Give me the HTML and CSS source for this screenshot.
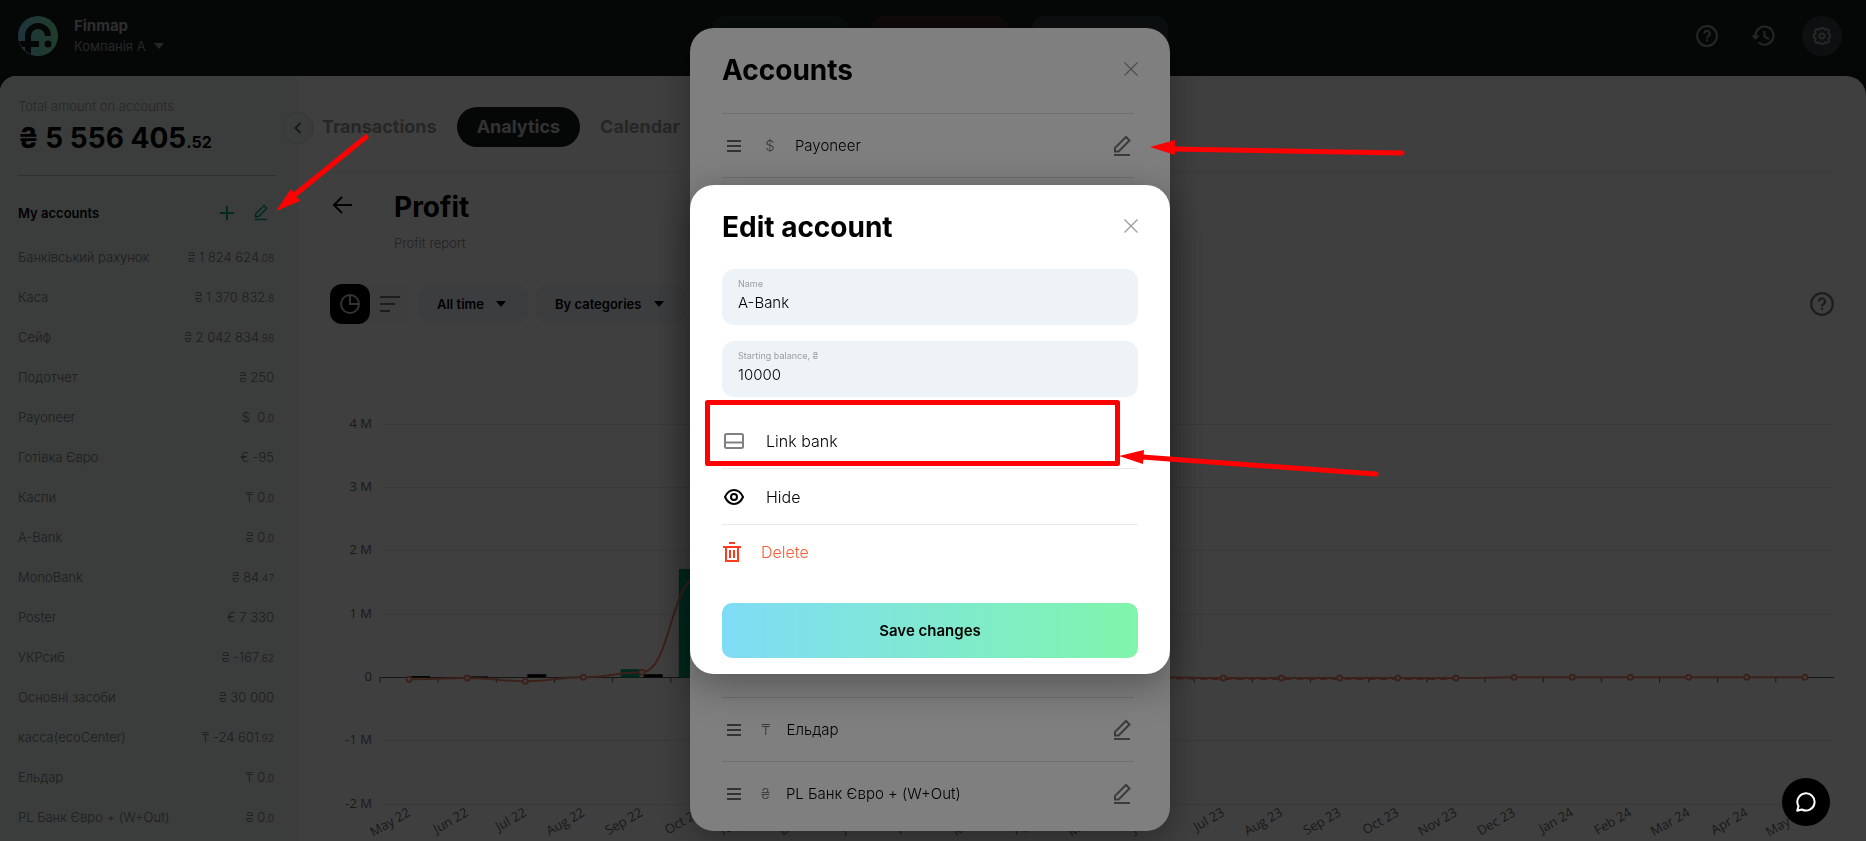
FILE: index.html
```html
<!DOCTYPE html>
<html lang="en">
<head>
    <meta charset="UTF-8">
    <meta name="viewport" content="width=device-width, initial-scale=1.0">
    <title>Finmap</title>
    <link rel="stylesheet" href="styles.css">
</head>
<body>
    <!-- Shared icons -->
    <svg class="sprite" aria-hidden="true">
        <symbol id="icon-edit" viewBox="0 0 18 22">
            <path d="M2 16.5v-3.6L13 2l3.5 3.5L5.6 16.5z" fill="none" stroke="currentColor" stroke-width="2"/>
            <path d="M1 20h16" stroke="currentColor" stroke-width="2"/>
        </symbol>
        <symbol id="icon-close" viewBox="0 0 14 14">
            <path d="M0.5 0.5l13 13M13.5 0.5l-13 13" stroke="currentColor" stroke-width="1.2"/>
        </symbol>
        <symbol id="icon-drag" viewBox="0 0 14 12">
            <path d="M0 1h14M0 6h14M0 11h14" stroke="currentColor" stroke-width="2"/>
        </symbol>
        <symbol id="icon-help" viewBox="0 0 24 24">
            <circle cx="12" cy="12" r="10.8" fill="none" stroke="currentColor" stroke-width="2.2"/>
            <path d="M9 9.6a3 3 0 1 1 4.6 2.4c-1 .7-1.6 1.2-1.6 2.4" fill="none" stroke="currentColor" stroke-width="2.2"/>
            <rect x="10.9" y="15.8" width="2.2" height="2.2" fill="currentColor"/>
        </symbol>
    </svg>

    <header class="header">
        <div class="brand">
            <svg class="logo" viewBox="0 0 40 40" aria-hidden="true">
                <defs>
                    <linearGradient id="logoFill" x1="0" x2="1">
                        <stop offset="0" stop-color="#7fd0f5"/>
                        <stop offset="1" stop-color="#80f5a8"/>
                    </linearGradient>
                    <clipPath id="logoClip"><circle cx="20" cy="20" r="19.5"/></clipPath>
                </defs>
                <circle cx="20" cy="20" r="20" fill="url(#logoFill)"/>
                <g clip-path="url(#logoClip)">
                    <path d="M10 40V20a10 10 0 0 1 20 0" fill="none" stroke="#151f1c" stroke-width="6"/>
                    <path d="M0 28h21" stroke="#151f1c" stroke-width="6"/>
                    <circle cx="30" cy="28" r="3.5" fill="#151f1c"/>
                </g>
            </svg>
            <div class="brand-text">
                <strong>Finmap</strong>
                <span class="company">
                    <select aria-label="Company">
                        <option>Компанія A</option>
                    </select>
                    <svg class="caret" viewBox="0 0 10 6" aria-hidden="true"><path d="M0 0h10L5 6z" fill="currentColor"/></svg>
                </span>
            </div>
        </div>
        <div class="quick-actions">
            <button class="quick income">Income</button>
            <button class="quick expense">Expense</button>
            <button class="quick transfer">Transfer</button>
        </div>
        <div class="header-tools">
            <button class="tool" aria-label="Help"><svg width="22" height="22" viewBox="0 0 24 24"><use href="#icon-help"/></svg></button>
            <button class="tool" aria-label="History">
                <svg width="24" height="24" viewBox="0 0 24 24">
                    <path d="M4.5 12a9 9 0 1 1 3.2 6.5" fill="none" stroke="currentColor" stroke-width="2"/>
                    <path d="M0.5 11.5h8L4.5 16z" fill="currentColor"/>
                    <path d="M13.5 7v5.5l4.5 2.6" fill="none" stroke="currentColor" stroke-width="2"/>
                </svg>
            </button>
            <button class="tool active" aria-label="Settings">
                <svg width="20" height="20" viewBox="0 0 20 20" fill="none" stroke="currentColor" stroke-width="2" stroke-linejoin="round">
                    <path d="M8.2 2.6 L10 1.8 L11.8 2.6 L12.5 3.8 L14.3 3 L16.3 3.7 L17 5.6 L16.3 7.5 L17.9 8.3 L18.3 10 L17.9 11.7 L16.3 12.5 L17 14.4 L16.3 16.3 L14.3 17 L12.5 16.2 L11.8 17.4 L10 18.2 L8.2 17.4 L7.5 16.2 L5.7 17 L3.7 16.3 L3 14.4 L3.7 12.5 L2.1 11.7 L1.7 10 L2.1 8.3 L3.7 7.5 L3 5.6 L3.7 3.7 L5.7 3 L7.5 3.8z"/>
                    <circle cx="10" cy="10" r="2.6"/>
                </svg>
            </button>
        </div>
    </header>

    <div class="layout">
        <aside class="sidebar">
            <div class="total">
                <p>Total amount on accounts</p>
                <strong>₴ 5 556 405<small>.52</small></strong>
                <button class="collapse" aria-label="Collapse sidebar">
                    <svg width="8" height="12" viewBox="0 0 8 12"><path d="M6.5 1L1.5 6l5 5" fill="none" stroke="currentColor" stroke-width="2"/></svg>
                </button>
            </div>
            <div class="accounts-head">
                <h2>My accounts</h2>
                <button aria-label="Add account"><svg width="14" height="14" viewBox="0 0 14 14"><path d="M7 0v14M0 7h14" stroke="currentColor" stroke-width="2"/></svg></button>
                <button aria-label="Edit accounts"><svg width="14" height="17"><use href="#icon-edit"/></svg></button>
            </div>
            <ul class="accounts">
                <li><span>Банківський рахунок</span><span>₴ 1 824 624<small>.08</small></span></li>
                <li><span>Каса</span><span>₴ 1 370 832<small>.8</small></span></li>
                <li><span>Сейф</span><span>₴ 2 042 834<small>.98</small></span></li>
                <li><span>Подотчет</span><span>₴ 250</span></li>
                <li><span>Payoneer</span><span>$ &nbsp;0<small>.0</small></span></li>
                <li><span>Готівка Євро</span><span>€ -95</span></li>
                <li><span>Каспи</span><span>₸ 0<small>.0</small></span></li>
                <li><span>A-Bank</span><span>₴ 0<small>.0</small></span></li>
                <li><span>MonoBank</span><span>₴ 84<small>.47</small></span></li>
                <li><span>Poster</span><span>€ 7 330</span></li>
                <li><span>УКРсиб</span><span>₴ -167<small>.62</small></span></li>
                <li><span>Основні засоби</span><span>₴ 30 000</span></li>
                <li><span>касса(ecoCenter)</span><span>₸ -24 601<small>.92</small></span></li>
                <li><span>Ельдар</span><span>₸ 0<small>.0</small></span></li>
                <li><span>PL Банк Євро + (W+Out)</span><span>₴ 0<small>.0</small></span></li>
            </ul>
        </aside>

        <main class="content">
            <nav class="tabs">
                <a href="#">Transactions</a>
                <a href="#" class="active">Analytics</a>
                <a href="#">Calendar</a>
            </nav>

            <div class="report-head">
                <button class="back" aria-label="Back">
                    <svg width="20" height="18" viewBox="0 0 20 18"><path d="M20 9H2.5M10 1L2 9l8 8" fill="none" stroke="currentColor" stroke-width="2"/></svg>
                </button>
                <div>
                    <h1>Profit</h1>
                    <p>Profit report</p>
                </div>
            </div>

            <div class="filters">
                <div class="view-switch">
                    <button class="active" aria-label="Chart view">
                        <svg width="20" height="20" viewBox="0 0 20 20" fill="none" stroke="currentColor" stroke-width="2"><circle cx="10" cy="10" r="9"/><path d="M10 1v9h9"/></svg>
                    </button>
                    <button aria-label="List view">
                        <svg width="20" height="16" viewBox="0 0 20 16"><path d="M0 1h20M0 8h15M0 15h10" stroke="currentColor" stroke-width="2"/></svg>
                    </button>
                </div>
                <span class="filter">
                    <select aria-label="Period"><option>All time</option></select>
                    <svg class="caret" viewBox="0 0 10 6" aria-hidden="true"><path d="M0 0h10L5 6z" fill="currentColor"/></svg>
                </span>
                <span class="filter">
                    <select aria-label="Grouping"><option>By categories</option></select>
                    <svg class="caret" viewBox="0 0 10 6" aria-hidden="true"><path d="M0 0h10L5 6z" fill="currentColor"/></svg>
                </span>
                <button class="help" aria-label="About this report"><svg width="24" height="24" viewBox="0 0 24 24"><use href="#icon-help"/></svg></button>
            </div>

            <svg id="chart" class="chart" role="img" aria-label="Profit by month"></svg>
        </main>
    </div>

    <!-- Accounts dialog -->
    <div class="backdrop">
        <section class="dialog accounts-dialog" role="dialog" aria-labelledby="accountsTitle">
            <div class="dialog-head">
                <h2 id="accountsTitle">Accounts</h2>
                <button class="close" aria-label="Close"><svg width="14" height="14"><use href="#icon-close"/></svg></button>
            </div>
            <ul class="account-list">
                <li><svg class="drag" width="14" height="12"><use href="#icon-drag"/></svg><span class="currency">&nbsp;$&nbsp;</span><span class="name">Payoneer</span><button aria-label="Edit Payoneer"><svg width="18" height="22"><use href="#icon-edit"/></svg></button></li>
                <li><svg class="drag" width="14" height="12"><use href="#icon-drag"/></svg><span class="currency">€</span><span class="name">Готівка Євро</span></li>
                <li><svg class="drag" width="14" height="12"><use href="#icon-drag"/></svg><span class="currency">₸</span><span class="name">Каспи</span></li>
                <li><svg class="drag" width="14" height="12"><use href="#icon-drag"/></svg><span class="currency">₴</span><span class="name">A-Bank</span></li>
                <li class="group-start"><svg class="drag" width="14" height="12"><use href="#icon-drag"/></svg><span class="currency">₴</span><span class="name">MonoBank</span></li>
                <li><svg class="drag" width="14" height="12"><use href="#icon-drag"/></svg><span class="currency">€</span><span class="name">Poster</span></li>
                <li><svg class="drag" width="14" height="12"><use href="#icon-drag"/></svg><span class="currency">₴</span><span class="name">УКРсиб</span></li>
                <li><svg class="drag" width="14" height="12"><use href="#icon-drag"/></svg><span class="currency">₴</span><span class="name">Основні засоби</span></li>
                <li><svg class="drag" width="14" height="12"><use href="#icon-drag"/></svg><span class="currency">₸</span><span class="name">касса(ecoCenter)</span></li>
                <li><svg class="drag" width="14" height="12"><use href="#icon-drag"/></svg><span class="currency">₸</span><span class="name">Ельдар</span><button aria-label="Edit Ельдар"><svg width="18" height="22"><use href="#icon-edit"/></svg></button></li>
                <li><svg class="drag" width="14" height="12"><use href="#icon-drag"/></svg><span class="currency">₴</span><span class="name">PL Банк Євро + (W+Out)</span><button aria-label="Edit PL Банк Євро"><svg width="18" height="22"><use href="#icon-edit"/></svg></button></li>
            </ul>
        </section>
    </div>

    <!-- Edit account dialog -->
    <div class="backdrop">
        <form class="dialog edit-dialog" role="dialog" aria-labelledby="editTitle">
            <div class="dialog-head">
                <h2 id="editTitle">Edit account</h2>
                <button type="button" class="close" aria-label="Close"><svg width="14" height="14"><use href="#icon-close"/></svg></button>
            </div>
            <div class="field">
                <label for="name">Name</label>
                <input type="text" id="name" value="A-Bank">
            </div>
            <div class="field">
                <label for="balance">Starting balance, ₴</label>
                <input type="text" id="balance" value="10000">
            </div>
            <div class="options">
                <button type="button" class="option">
                    <svg width="20" height="16" viewBox="0 0 20 16" fill="none" stroke="#808080" stroke-width="2"><rect x="1" y="1" width="18" height="14" rx="1.5"/><path d="M1 9.5h18"/></svg>
                    Link bank
                </button>
                <button type="button" class="option">
                    <svg width="20" height="16" viewBox="0 0 20 16" fill="none" stroke="#000" stroke-width="2"><path d="M1 8c2-4.500 5.200-7 9-7s7 2.500 9 7c-2 4.500-5.200 7-9 7s-7-2.500-9-7z"/><circle cx="10" cy="8" r="3"/></svg>
                    Hide
                </button>
                <button type="button" class="option delete">
                    <svg width="18" height="20" viewBox="0 0 18 20" fill="none" stroke="#ff3b1f" stroke-width="2"><path d="M6 1h6M0 5h18M3 5v14h12V5M7 8v8M11 8v8"/></svg>
                    Delete
                </button>
            </div>
            <button type="submit" class="save">Save changes</button>
        </form>
    </div>

    <!-- Guide marks -->
    <svg class="marks" viewBox="0 0 1866 841" aria-hidden="true">
        <g stroke="#f00" stroke-width="5" stroke-linecap="round" fill="none">
            <path d="M366 137L292 197"/>
            <path d="M1402 153L1172 149"/>
            <path d="M1376 474L1142 457"/>
            <rect x="707.5" y="402.5" width="410" height="61" stroke-linejoin="round"/>
        </g>
        <g fill="#f00">
            <path d="M276 211l15-22 9 12z"/>
            <path d="M1150 147l25-7v15z"/>
            <path d="M1119 456l25-6-1 14z"/>
        </g>
    </svg>

    <button class="chat" aria-label="Open chat">
        <svg width="20" height="20" viewBox="0 0 20 20"><path d="M1.2 18.8l1.3-4.600a8.600 8.600 0 1 1 3.400 3.300z" fill="none" stroke="currentColor" stroke-width="2" stroke-linejoin="round"/></svg>
    </button>

    <script src="chart.js"></script>
</body>
</html>
```
FILE: styles.css
```css
:root {
    --header-color: #151f1c;
    --sidebar-color: #eef4f1;
    --accent-color: #00a67c;
    --muted-color: #989c9b;
    --field-color: #edf3f6;
    --line-color: #e8e8e8;
}

* {
    margin: 0;
    padding: 0;
    box-sizing: border-box;
    font-family: Inter, "Noto Sans", sans-serif;
}

body {
    height: 100vh;
    overflow: hidden;
    background-color: var(--header-color);
    color: #000;
    font-size: 13px;
}

button {
    display: flex;
    align-items: center;
    justify-content: center;
    background: none;
    border: none;
    color: inherit;
    cursor: pointer;
}

select {
    appearance: none;
    background: none;
    border: none;
    color: inherit;
    cursor: pointer;
}

ul {
    list-style: none;
}

.sprite {
    position: absolute;
    width: 0;
    height: 0;
}

.caret {
    width: 10px;
    height: 6px;
    flex: none;
    pointer-events: none;
}

/* Header */
.header {
    display: grid;
    grid-template-columns: 1fr auto 1fr;
    align-items: center;
    height: 76px;
    padding: 0 24px 4px 18px;
    color: #969e9b;
}

.brand {
    display: flex;
    gap: 16px;
}

.logo {
    width: 40px;
    height: 40px;
}

.brand-text strong {
    display: block;
    font-size: 15px;
    line-height: 20px;
    color: #b4b8b6;
}

.company {
    display: flex;
    align-items: center;
    gap: 8px;
}

.company select {
    font-size: 13px;
    line-height: 20px;
}

.quick-actions {
    display: flex;
    gap: 24px;
    margin-left: 20px;
}

.quick {
    width: 136px;
    height: 40px;
    border-radius: 12px;
}

.income {
    background-color: #22332f;
}

.expense {
    background-color: #3f2a29;
}

.transfer {
    background-color: #313b3f;
}

.header-tools {
    display: flex;
    justify-content: flex-end;
    gap: 22px;
}

.tool {
    width: 34px;
    height: 40px;
}

.tool.active {
    width: 40px;
    border-radius: 50%;
    background-color: #3a3e42;
}

/* Layout */
.layout {
    display: flex;
    height: calc(100vh - 76px);
    overflow: hidden;
    background-color: #fff;
    border-radius: 16px 20px 0 0;
}

.sidebar {
    flex: 0 0 298px;
    padding: 20px 22px 0 18px;
    background-color: var(--sidebar-color);
}

.total {
    position: relative;
    height: 80px;
    border-bottom: 1px solid #b8bcba;
}

.total p {
    line-height: 20px;
    font-weight: 300;
    color: var(--muted-color);
}

.total strong {
    display: block;
    font-size: 28px;
    font-weight: 700;
    line-height: 44px;
}

.total small {
    font-size: 16px;
}

.collapse {
    position: absolute;
    top: 16px;
    right: -38px;
    width: 32px;
    height: 32px;
    border: 1px solid #d0d4d2;
    border-radius: 50%;
    background-color: var(--sidebar-color);
    color: #666;
}

.accounts-head {
    display: flex;
    align-items: center;
    height: 61px;
    padding: 12px 8px 0 0;
    gap: 20px;
    color: var(--accent-color);
}

.accounts-head h2 {
    flex: 1;
    font-size: 13px;
    font-weight: 600;
    color: #000;
}

.accounts li {
    display: flex;
    align-items: center;
    justify-content: space-between;
    height: 40px;
    line-height: 20px;
    padding-right: 2px;
    font-weight: 300;
    color: #70767a;
    white-space: nowrap;
}

.accounts small {
    font-size: 10px;
    line-height: 10px;
}

.content {
    flex: 1;
    min-width: 0;
    padding: 0 32px;
}

.tabs {
    display: flex;
    align-items: center;
    height: 97px;
    padding-top: 6px;
    border-bottom: 1px solid #eee;
}

.tabs a {
    padding: 0 20px;
    line-height: 40px;
    border-radius: 20px;
    font-size: 18px;
    font-weight: 700;
    color: #999;
    text-decoration: none;
}

.tabs a:first-child {
    padding-left: 0;
    margin-left: -8px;
}

.tabs .active {
    background-color: var(--header-color);
    color: #c8cac9;
}

.report-head {
    display: flex;
    gap: 42px;
    height: 111px;
    padding: 14px 0 0 2px;
}

.back {
    height: 36px;
}

.report-head h1 {
    font-size: 28px;
    font-weight: 700;
    line-height: 40px;
}

.report-head p {
    margin-top: 6px;
    line-height: 20px;
    font-weight: 300;
    color: #888;
}

.filters {
    display: flex;
    gap: 8px;
}

.view-switch {
    display: flex;
    border-radius: 12px;
    background-color: #f4f8f7;
    color: #777;
}

.view-switch button {
    width: 40px;
    height: 40px;
    border-radius: 12px;
}

.view-switch .active {
    background-color: #000;
    color: #ccc;
}

.filter {
    display: flex;
    align-items: center;
    gap: 12px;
    height: 40px;
    padding: 0 22px 0 19px;
    border-radius: 12px;
    background-color: #f2f5fa;
}

.filter select {
    font-size: 13px;
    font-weight: 600;
}

.help {
    margin-left: auto;
    color: #777;
}

.chart {
    display: block;
    width: 100%;
    height: 517px;
}

.chart text {
    font-family: "Open Sans", "Noto Sans", sans-serif;
    font-size: 13px;
    fill: #666;
}

.grid-line {
    stroke: #e4e6ea;
}

.axis {
    stroke: #555;
}

.bar-income {
    fill: #00a67c;
}

.bar-expense {
    fill: #000;
}

.profit {
    fill: none;
    stroke: #f0826a;
    stroke-width: 2;
}

.forecast {
    stroke-dasharray: 7 5;
}

.point {
    fill: #fff;
    stroke: #f0826a;
    stroke-width: 2;
}

/* Dialogs */
.backdrop {
    position: fixed;
    inset: 0;
    display: flex;
    align-items: center;
    justify-content: center;
    padding: 18px 6px 0 0;
    background-color: rgba(0, 0, 0, 0.5);
}

.dialog {
    width: 480px;
    padding: 0 32px;
    border-radius: 24px;
    background-color: #fff;
    box-shadow: 0 10px 40px rgba(0, 0, 0, 0.35);
}

.dialog-head {
    display: flex;
    align-items: center;
    justify-content: space-between;
    height: 84px;
}

.dialog-head h2 {
    font-size: 28px;
    font-weight: 700;
}

.close {
    height: 32px;
    padding-bottom: 3px;
    color: #999;
}

.accounts-dialog {
    height: calc(100vh - 38px);
    overflow: hidden;
}

.account-list {
    margin-top: 1px;
    padding-right: 4px;
}

.account-list li {
    display: flex;
    align-items: center;
    height: 64px;
    padding: 0 3px 0 5px;
    border-top: 1px solid #dcdcdc;
    font-size: 15px;
    font-weight: 300;
}

.account-list .group-start {
    height: 72px;
}

.drag {
    color: #666;
}

.currency {
    margin: 0 16px 0 20px;
    color: #777;
}

.account-list .name {
    flex: 1;
}

.account-list button {
    color: #777;
}

.edit-dialog {
    padding-bottom: 16px;
}

.field {
    height: 56px;
    margin-bottom: 16px;
    padding: 9px 16px 0;
    border-radius: 12px;
    background-color: var(--field-color);
}

.field label {
    display: block;
    font-size: 9px;
    line-height: 12px;
    color: #999ea0;
}

.field input {
    display: block;
    width: 100%;
    height: 24px;
    border: none;
    outline: none;
    background: none;
    font-size: 15px;
    font-weight: 300;
}

.option {
    justify-content: flex-start;
    gap: 22px;
    width: 100%;
    height: 56px;
    padding: 0 2px;
    border-bottom: 1px solid var(--line-color);
    font-size: 16px;
    font-weight: 300;
}

.option.delete {
    gap: 20px;
    height: 54px;
    padding: 0 1px;
    border-bottom: none;
    color: #ff5a36;
}

.save {
    width: 100%;
    height: 55px;
    margin-top: 24px;
    padding-bottom: 1px;
    border-radius: 10px;
    background: linear-gradient(90deg, #7fdcf6, #80f5ab);
    font-size: 15px;
    font-weight: 600;
}

.marks {
    position: fixed;
    inset: 0;
    width: 100%;
    height: 100%;
    pointer-events: none;
}

.chat {
    position: fixed;
    right: 36px;
    bottom: 15px;
    width: 48px;
    height: 48px;
    border-radius: 50%;
    background-color: #000;
    color: #fff;
}
```
FILE: chart.js
```javascript
const SVG_NS = 'http://www.w3.org/2000/svg';
const chart = document.getElementById('chart');

const monthNames = ['Jan', 'Feb', 'Mar', 'Apr', 'May', 'Jun', 'Jul', 'Aug', 'Sep', 'Oct', 'Nov', 'Dec'];

// Values in millions, one per month from May 22 to May 24
const income = [0, 0, 0, 0.01, 0.13, 1.71];
const expense = [0.02, 0.015, 0.05, 0, 0.05];
const profit = [-0.03, -0.01, -0.06, 0, 0.08, 1.6, 0.4, 0, 0, 0, 0, 0, 0, 0, -0.01, -0.01, -0.01, -0.01, -0.01, 0, 0, 0, 0, 0, 0];

const left = 50;
const top0 = 100;
const stepY = 63.34;

function add(tag, attrs, text) {
    const el = document.createElementNS(SVG_NS, tag);
    for (const key in attrs) {
        el.setAttribute(key, attrs[key]);
    }
    if (text) {
        el.textContent = text;
    }
    chart.appendChild(el);
}

function yOf(value) {
    return top0 + (4 - value) * stepY;
}

// Smooth line with horizontal tangents at the points
function smooth(points) {
    return points.map((p, i) => {
        if (i === 0) {
            return `M${p[0]} ${p[1]}`;
        }
        const prev = points[i - 1];
        const half = (p[0] - prev[0]) / 2;
        return `C${prev[0] + half} ${prev[1]} ${p[0] - half} ${p[1]} ${p[0]} ${p[1]}`;
    }).join('');
}

function draw() {
    chart.innerHTML = '';
    const right = chart.clientWidth;
    const step = (right - left) / profit.length;
    const zero = Math.floor(yOf(0)) + 0.5;

    for (let v = 4; v >= -2; v--) {
        const y = Math.floor(yOf(v)) + 0.5;
        add('line', { x1: left, x2: right, y1: y, y2: y, class: v === 0 ? 'axis' : 'grid-line' });
        add('text', { x: left - 8, y: y + 3, 'text-anchor': 'end' }, v === 0 ? '0' : v + ' M');
    }

    profit.forEach((value, i) => {
        const x = left + i * step;
        add('line', { x1: x, x2: x, y1: zero, y2: zero + 5, class: 'axis' });
        if (income[i]) {
            add('rect', { x: x + 8, y: yOf(income[i]), width: 19, height: income[i] * stepY, class: 'bar-income' });
        }
        if (expense[i]) {
            add('rect', { x: x + 31, y: yOf(expense[i]), width: 19, height: expense[i] * stepY, class: 'bar-expense' });
        }
        const month = monthNames[(i + 4) % 12] + ' ' + (22 + Math.floor((i + 4) / 12));
        const cx = x + step / 2;
        add('text', { 'text-anchor': 'end', transform: `translate(${cx + 2} ${yOf(-2) + 11}) rotate(-30)` }, month);
    });

    const points = profit.map((value, i) => [left + (i + 0.5) * step, yOf(value)]);
    add('path', { d: smooth(points), class: 'profit' });
    add('path', { d: smooth(points.slice(7, 19).map(p => [p[0], p[1] + 1])), class: 'profit forecast' });
    points.forEach(p => add('circle', { cx: p[0], cy: p[1], r: 2.5, class: 'point' }));
}

draw();
window.addEventListener('resize', draw);
```
